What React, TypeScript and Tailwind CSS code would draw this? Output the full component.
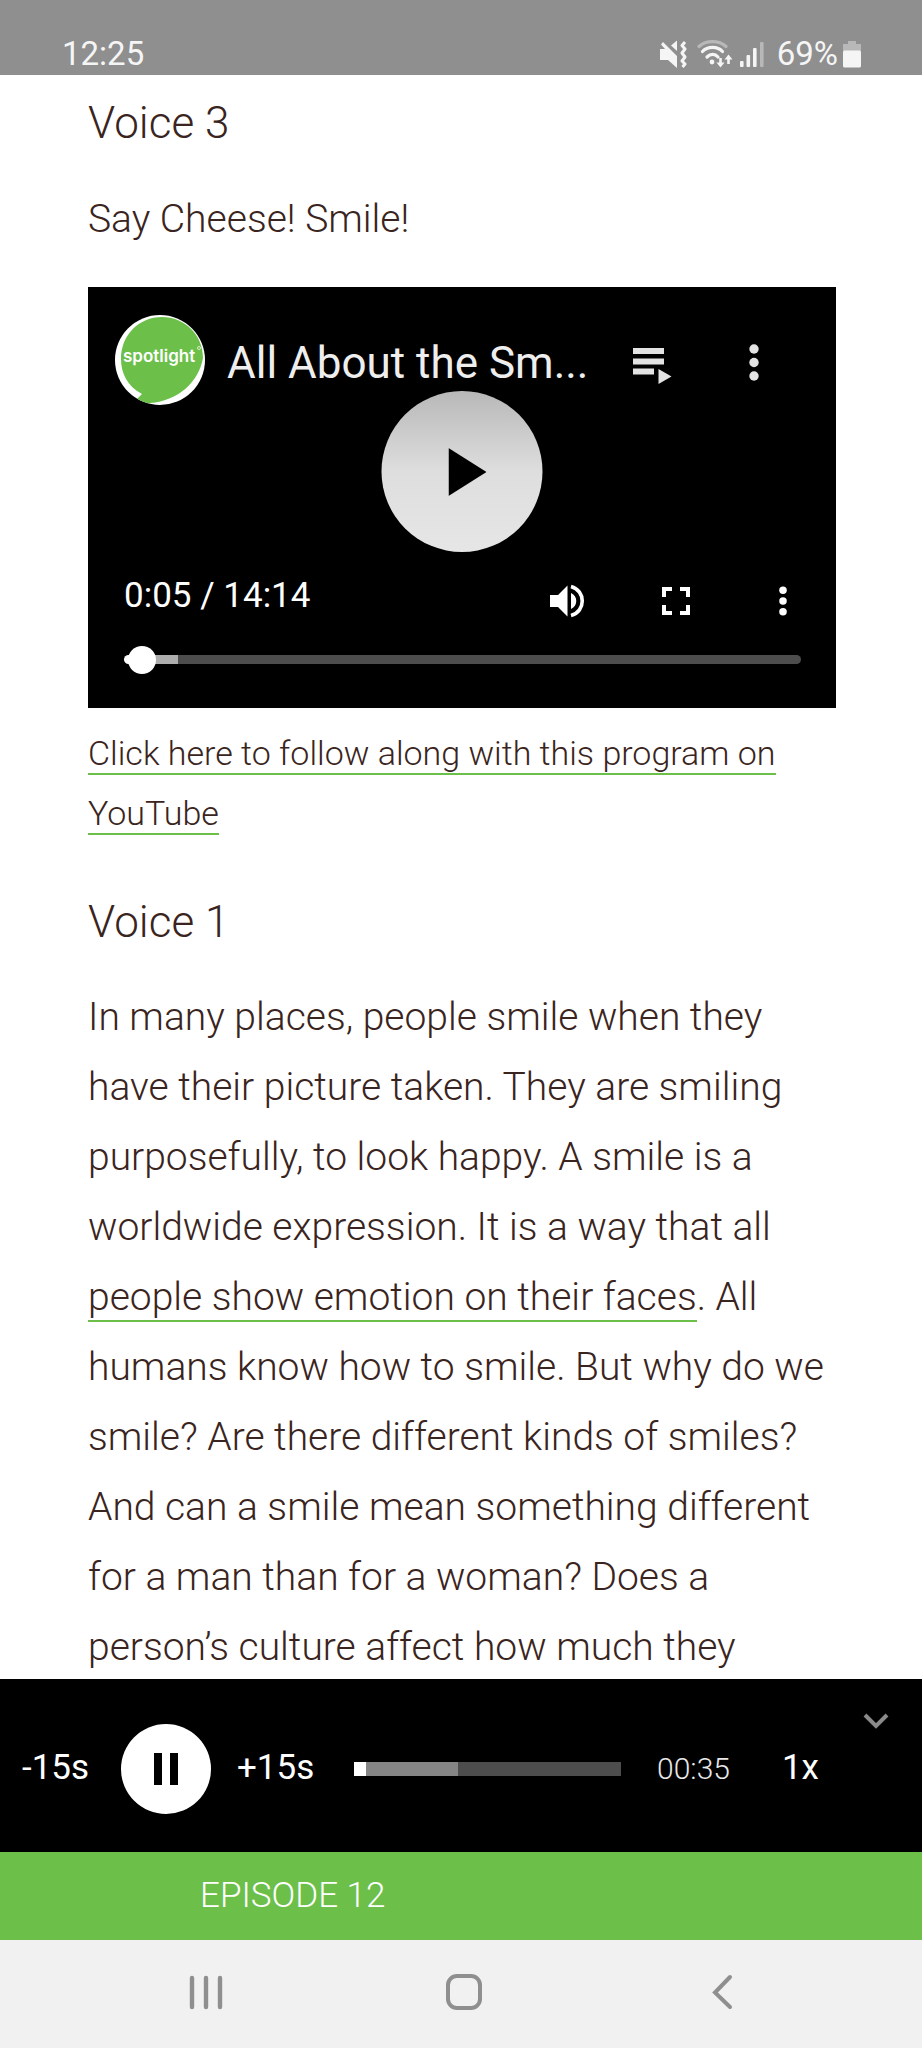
const BODY = "text-[39px] leading-[70px]";
const VOICE = "text-[44px] leading-[70px]";
const LINK = "border-b-2 border-[#6cc04a]";

const MoreIcon = ({ className }: { className: string }) => (
  <svg viewBox="0 0 10 37" className={className} fill="currentColor" aria-hidden="true">
    <circle cx="5" cy="5" r="4.7" />
    <circle cx="5" cy="18.500" r="4.7" />
    <circle cx="5" cy="32" r="4.7" />
  </svg>
);

const StatusBar = () => {
  return (
    <header className="shrink-0 flex items-end justify-between h-[75px] pl-[62px] pr-[60px] bg-[#8f8f8f] text-[#f5f5f5]">
      <span className="text-[33px] leading-[42px]">12:25</span>
      <div className="flex items-center">
        {/* Mute / vibrate */}
        <svg viewBox="0 0 28 28" className="w-7 h-7 mr-[10px]" fill="currentColor" aria-hidden="true">
          <path d="M1 9h5L2 4.500l2-2.500 14 14v12l-9-8H1z" />
          <path d="M12 5.500L18 0.500v10.500z" />
          <path d="M26 2l-3 3.500 3 3.500-3 4 3 4-3 4 3 3-2.500 3" fill="none" stroke="currentColor" strokeWidth="3" strokeLinejoin="round" />
        </svg>
        {/* Wifi */}
        <svg viewBox="0 0 36 28" className="w-9 h-7 mr-[7px]" fill="none" stroke="currentColor" strokeWidth="3.200" strokeLinecap="round" aria-hidden="true">
          <path d="M2 6.500C9 0 22 0 29 6.500" opacity="0.4" />
          <path d="M5.500 11.500c5-5.500 15-5.500 20 0M10 17c3.500-3.500 8-3.500 11 0" />
          <circle cx="15" cy="22" r="2.400" fill="currentColor" stroke="none" />
          <path d="M23.500 18v6M31.500 18v6" strokeWidth="2.600" strokeLinecap="butt" />
          <path d="M19.500 22.500h8l-4 5zM27.500 19.500h8l-4-5z" fill="currentColor" stroke="none" />
        </svg>
        {/* Signal */}
        <svg viewBox="0 0 24 28" className="w-6 h-7 mr-[13px]" fill="currentColor" aria-hidden="true">
          <rect x="0" y="21" width="3.600" height="6" rx="1" />
          <rect x="6.500" y="15" width="3.600" height="12" rx="1" />
          <rect x="13" y="8" width="3.600" height="19" rx="1" />
          <rect x="20" y="2" width="3.600" height="25" rx="1" opacity="0.4" />
        </svg>
        <span className="text-[33px] leading-[42px]">69%</span>
        <svg viewBox="0 0 20 28" className="w-5 h-7 ml-1" fill="currentColor" aria-hidden="true">
          <path d="M1 11V4h5V1h8v3h5v7z" opacity="0.4" />
          <rect x="1" y="10.500" width="18" height="17" rx="1.500" />
        </svg>
      </div>
    </header>
  );
};

const SpotlightLogo = () => (
  <svg viewBox="0 0 90 90" className="w-[90px] h-[90px] shrink-0" role="img" aria-label="spotlight">
    <defs>
      <clipPath id="logoClip">
        <circle cx="45" cy="45" r="45" />
      </clipPath>
    </defs>
    <g clipPath="url(#logoClip)">
      <rect width="90" height="90" fill="#fff" />
      <path d="M47 2C70 2 88 20 88 43C84 66 64 86 35 88L32 91L22 84L27 79C12 71 6 58 6 44C6 20 24 2 47 2Z" fill="#6cc04a" />
    </g>
    <text x="8" y="47" fontSize="17" className="font-['Inter'] font-semibold" fill="#fff">spotlight</text>
    <circle cx="84" cy="33" r="1.500" fill="none" stroke="#fff" strokeWidth="0.700" />
  </svg>
);

const VideoPlayer = () => {
  return (
    <section className="relative flex flex-col h-[421px] mt-[33px] bg-black text-white font-normal">
      <div className="flex items-center pt-7 pl-[27px] pr-[77px]">
        <SpotlightLogo />
        <h2 className="flex-1 pl-[22px] text-[44px] leading-[60px] pt-[6px] text-[#eee] whitespace-nowrap">
          All About the Sm...
        </h2>
        <button aria-label="Playlist" className="mr-[77px] mt-3 text-[#e3e3e3]">
          <svg viewBox="0 0 39 38" className="w-[39px] h-[38px]" fill="currentColor" aria-hidden="true">
            <path d="M0 1h31v6H0zM0 11.500h31v6H0zM0 21.500h21v6H0zM25.500 22l13 7.500-13 7.500z" />
          </svg>
        </button>
        <button aria-label="More" className="mt-1 text-[#e3e3e3]">
          <MoreIcon className="w-[10px] h-[37px]" />
        </button>
      </div>

      {/* Big play button */}
      <button
        aria-label="Play"
        className="absolute left-1/2 top-[104px] -translate-x-1/2 w-[161px] h-[161px] rounded-full bg-linear-to-b from-[#b8b8b8] via-[#dedede] to-[#e6e6e6] flex items-center justify-center"
      >
        <svg viewBox="0 0 38 48" className="w-[38px] h-12 ml-[10px]" aria-hidden="true">
          <path d="M0 0l38 24L0 48z" fill="#000" />
        </svg>
      </button>

      {/* Bottom controls */}
      <div className="mt-auto pl-9 pr-[35px] pb-[44px]">
        <div className="flex items-center pr-[14px]">
          <span className="flex-1 text-[35px] leading-[50px] pb-[10px]">0:05 / 14:14</span>
          <button aria-label="Volume" className="mr-[77px]">
            <svg viewBox="0 0 35 34" className="w-[35px] h-[34px]" fill="currentColor" aria-hidden="true">
              <path d="M0 11h8l9.500-9.500v31L8 23H0z" />
              <path d="M21 9c7 3 7 13 0 16z" />
              <path d="M21 2.500c15 4 15 25 0 29" fill="none" stroke="currentColor" strokeWidth="3.600" />
            </svg>
          </button>
          <button aria-label="Full screen" className="mr-[89px]">
            <svg viewBox="0 0 28 28" className="w-7 h-7" fill="none" stroke="currentColor" strokeWidth="4" aria-hidden="true">
              <path d="M2 10V2h8M18 2h8v8M26 18v8h-8M10 26H2v-8" />
            </svg>
          </button>
          <button aria-label="Options">
            <MoreIcon className="w-2 h-[30px]" />
          </button>
        </div>
        <input
          type="range"
          aria-label="Seek video"
          min={0}
          max={854}
          defaultValue={5}
          className="block w-full h-[9px] mt-[24px] appearance-none rounded-full bg-[linear-gradient(to_right,#fff_18px,#adadad_18px,#adadad_54px,#4d4d4d_54px)] [&::-webkit-slider-thumb]:appearance-none [&::-webkit-slider-thumb]:size-7 [&::-webkit-slider-thumb]:rounded-full [&::-webkit-slider-thumb]:bg-white"
        />
      </div>
    </section>
  );
};

const AudioPlayer = () => {
  return (
    <footer className="relative shrink-0 flex items-center h-[173px] pt-[6px] pl-[22px] pr-[103px] bg-black text-white text-[35px] font-normal">
      <button className="w-[99px] text-left">-15s</button>
      <button aria-label="Pause" className="w-[90px] h-[90px] rounded-full bg-white flex items-center justify-center gap-2">
        <span className="w-2 h-8 bg-black" />
        <span className="w-2 h-8 bg-black" />
      </button>
      <button className="w-[117px] ml-[26px] text-left">+15s</button>
      <input
        type="range"
        aria-label="Seek audio"
        defaultValue={4}
        className="flex-1 min-w-0 h-[14px] appearance-none bg-[linear-gradient(to_right,#fff_12px,#858585_12px,#858585_104px,#4d4d4d_104px)] [&::-webkit-slider-thumb]:appearance-none [&::-webkit-slider-thumb]:size-0"
      />
      <span className="ml-9 text-[30px] font-light text-[#e8e8e8]">00:35</span>
      <button className="ml-[52px]">1x</button>
      <button aria-label="Collapse player" className="absolute right-[33px] top-[34px] text-[#8a8a8a]">
        <svg viewBox="0 0 26 18" className="w-[26px] h-[18px]" fill="none" stroke="currentColor" strokeWidth="4" aria-hidden="true">
          <path d="M2 2l11 11L24 2" />
        </svg>
      </button>
    </footer>
  );
};

const NavBar = () => {
  return (
    <nav className="shrink-0 grid grid-cols-3 items-center justify-items-center h-[108px] pb-1 pl-[77px] pr-[71px] bg-[#f1f1f1] text-[#8f8f8f]">
      <button aria-label="Recents">
        <svg viewBox="0 0 34 36" className="w-[34px] h-9" stroke="currentColor" strokeWidth="4.400" strokeLinecap="round" aria-hidden="true">
          <path d="M3 4v29M17 4v29M31 4v29" />
        </svg>
      </button>
      <button aria-label="Home">
        <svg viewBox="0 0 38 38" className="w-[38px] h-[38px]" fill="none" stroke="currentColor" strokeWidth="4" aria-hidden="true">
          <rect x="3" y="3" width="32" height="32" rx="9" />
        </svg>
      </button>
      <button aria-label="Back">
        <svg viewBox="0 0 22 36" className="w-[22px] h-9" fill="none" stroke="currentColor" strokeWidth="4" strokeLinecap="round" aria-hidden="true">
          <path d="M19 3L4 18.500 19 33" />
        </svg>
      </button>
    </nav>
  );
};

export default function App() {
  return (
    <div className="flex flex-col h-screen overflow-hidden bg-white font-['Roboto',sans-serif]">
      <StatusBar />

      <main className="flex-1 min-h-0 overflow-hidden pt-[13px] pl-[88px] pr-[86px] font-light text-[#3a2420]">
        <p className={VOICE}>Voice 3</p>
        <p className={`${BODY} mt-[26px]`}>Say Cheese! Smile!</p>

        <VideoPlayer />

        <p className="mt-[15px] text-[34px] leading-[60px]">
          <a href="#youtube" className={LINK}>
            Click here to follow along with this program on YouTube
          </a>
        </p>

        <p className={`${VOICE} mt-11`}>Voice 1</p>
        <p className={`${BODY} mt-[25px]`}>
          In many places, people smile when they have their picture taken. They are smiling
          purposefully, to look happy. A smile is a worldwide expression. It is a way that all{" "}
          <a href="#faces" className={LINK}>people show emotion on their faces</a>. All humans
          know how to smile. But why do we smile? Are there different kinds of smiles? And can a
          smile mean something different for a man than for a woman? Does a person’s culture
          affect how much they
        </p>
      </main>

      <AudioPlayer />
      <div className="shrink-0 h-[88px] pl-[200px] bg-[#6cc04a] text-white text-[35px] leading-[88px] font-light">
        EPISODE 12
      </div>
      <NavBar />
    </div>
  );
}
